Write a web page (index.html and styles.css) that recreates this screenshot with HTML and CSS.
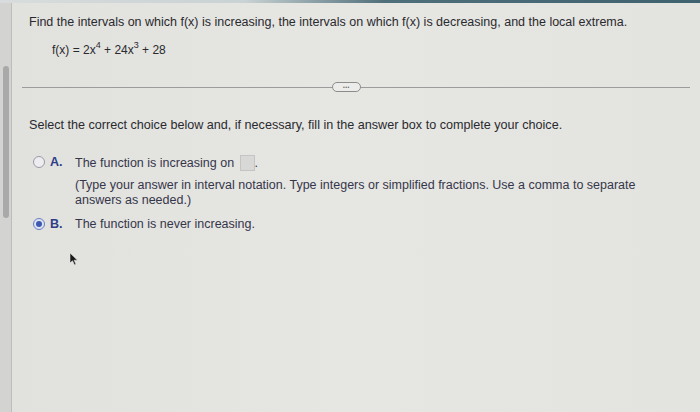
FILE: index.html
```html
<!DOCTYPE html>
<html>
<head>
<meta charset="utf-8">
<link rel="stylesheet" href="styles.css">
</head>
<body>
<div class="topbar"></div>
<div class="frame">
  <div class="sidebar"><div class="thumb"></div></div>
  <div class="main">
    <p class="question">Find the intervals on which f(x) is increasing, the intervals on which f(x) is decreasing, and the local extrema.</p>
    <p class="formula">f(x) = 2x<sup>4</sup> + 24x<sup>3</sup> + 28</p>
    <div class="divider"><span class="line left"></span><span class="pill"><span class="dots">•••</span></span><span class="line"></span></div>
    <p class="instr">Select the correct choice below and, if necessary, fill in the answer box to complete your choice.</p>
    <div class="choice">
      <span class="radio"></span>
      <span class="letter">A.</span>
      <div class="ctext">
        <div>The function is increasing on <span class="box"></span>.</div>
        <div class="hint">(Type your answer in interval notation. Type integers or simplified fractions. Use a comma to separate answers as needed.)</div>
      </div>
    </div>
    <div class="choice choice-b">
      <span class="radio checked"><span class="dot"></span></span>
      <span class="letter">B.</span>
      <div class="ctext"><div>The function is never increasing.</div></div>
    </div>
    <div class="cursor-row">
      <svg class="cursor" width="10" height="14" viewBox="0 0 10 14"><path d="M1 1 L1 11 L3.5 8.8 L5.5 13 L7 12.3 L5.1 8.2 L8.5 8.2 Z" fill="#1a1a1a" stroke="#e8e8e6" stroke-width="0.6"/></svg>
    </div>
  </div>
</div>
</body>
</html>
```
FILE: styles.css
```css
html, body {
  margin: 0;
  padding: 0;
  width: 700px;
  height: 412px;
  overflow: hidden;
  background: #e3e3e0;
  font-family: "Liberation Sans", Arial, sans-serif;
  color: #2a2a2e;
}
.topbar {
  height: 3px;
  background: linear-gradient(to right, #d8dcdc 0%, #c9d2d4 35%, #4f6f7a 55%, #3f6270 100%);
}
.frame {
  display: flex;
  height: 409px;
}
.sidebar {
  width: 12px;
  background: #d3d3d1;
  border-right: 1px solid #bdbdbb;
  display: flex;
  flex-direction: column;
  align-items: center;
  padding-top: 63px;
  box-sizing: border-box;
}
.thumb {
  width: 6px;
  height: 152px;
  border-radius: 3px;
  background: #a9a9a9;
}
.main {
  flex: 1;
  padding: 0 10px 0 17px;
  background: linear-gradient(to right, #e1e1de, #e6e6e3 50%, #e3e3e0);
}
p { margin: 0; }
.question {
  font-size: 12.5px;
  margin-top: 11px;
  line-height: 16px;
}
.formula {
  font-size: 12px;
  margin-top: 12px;
  margin-left: 23px;
  line-height: 16px;
}
.formula sup {
  font-size: 9px;
  vertical-align: 6px;
  line-height: 0;
}
.divider {
  display: flex;
  align-items: center;
  margin-top: 24px;
  margin-left: -7px;
}
.line {
  flex: 1;
  height: 1px;
  background: #9c9c9c;
}
.line.left {
  flex: none;
  width: 310px;
}
.pill {
  width: 27px;
  height: 8px;
  border: 1px solid #8c8c8c;
  border-radius: 5px;
  background: #ececea;
  display: flex;
  align-items: center;
  justify-content: center;
}
.dots {
  font-size: 5px;
  letter-spacing: 0.5px;
  color: #666;
  line-height: 5px;
}
.instr {
  font-size: 12.6px;
  margin-top: 25px;
  line-height: 16px;
}
.choice {
  display: flex;
  align-items: flex-start;
  margin-top: 22px;
  margin-left: 3px;
  font-size: 12.5px;
  color: #36364a;
  line-height: 15px;
}
.choice-b { margin-top: 9px; }
.radio {
  width: 12px;
  height: 12px;
  border: 1px solid #9a9aa8;
  border-radius: 50%;
  background: #ededf0;
  box-sizing: border-box;
  display: flex;
  align-items: center;
  justify-content: center;
  margin-top: 1px;
  margin-left: 1px;
  flex: none;
}
.radio.checked {
  border-color: #6a7ec0;
  background: #dfe4f4;
}
.dot {
  width: 6px;
  height: 6px;
  border-radius: 50%;
  background: #3d58b0;
}
.letter {
  width: 25px;
  margin-left: 5px;
  font-weight: bold;
  color: #2e3d88;
  flex: none;
}
.ctext { width: 570px; }
.hint { margin-top: 7px; }
.box {
  display: inline-block;
  width: 13px;
  height: 14px;
  border: 1px solid #c4c4c4;
  background: #d8d8d6;
  vertical-align: -4px;
  margin-left: 2px;
}
.cursor-row {
  margin-top: 20px;
  margin-left: 40px;
}
```
